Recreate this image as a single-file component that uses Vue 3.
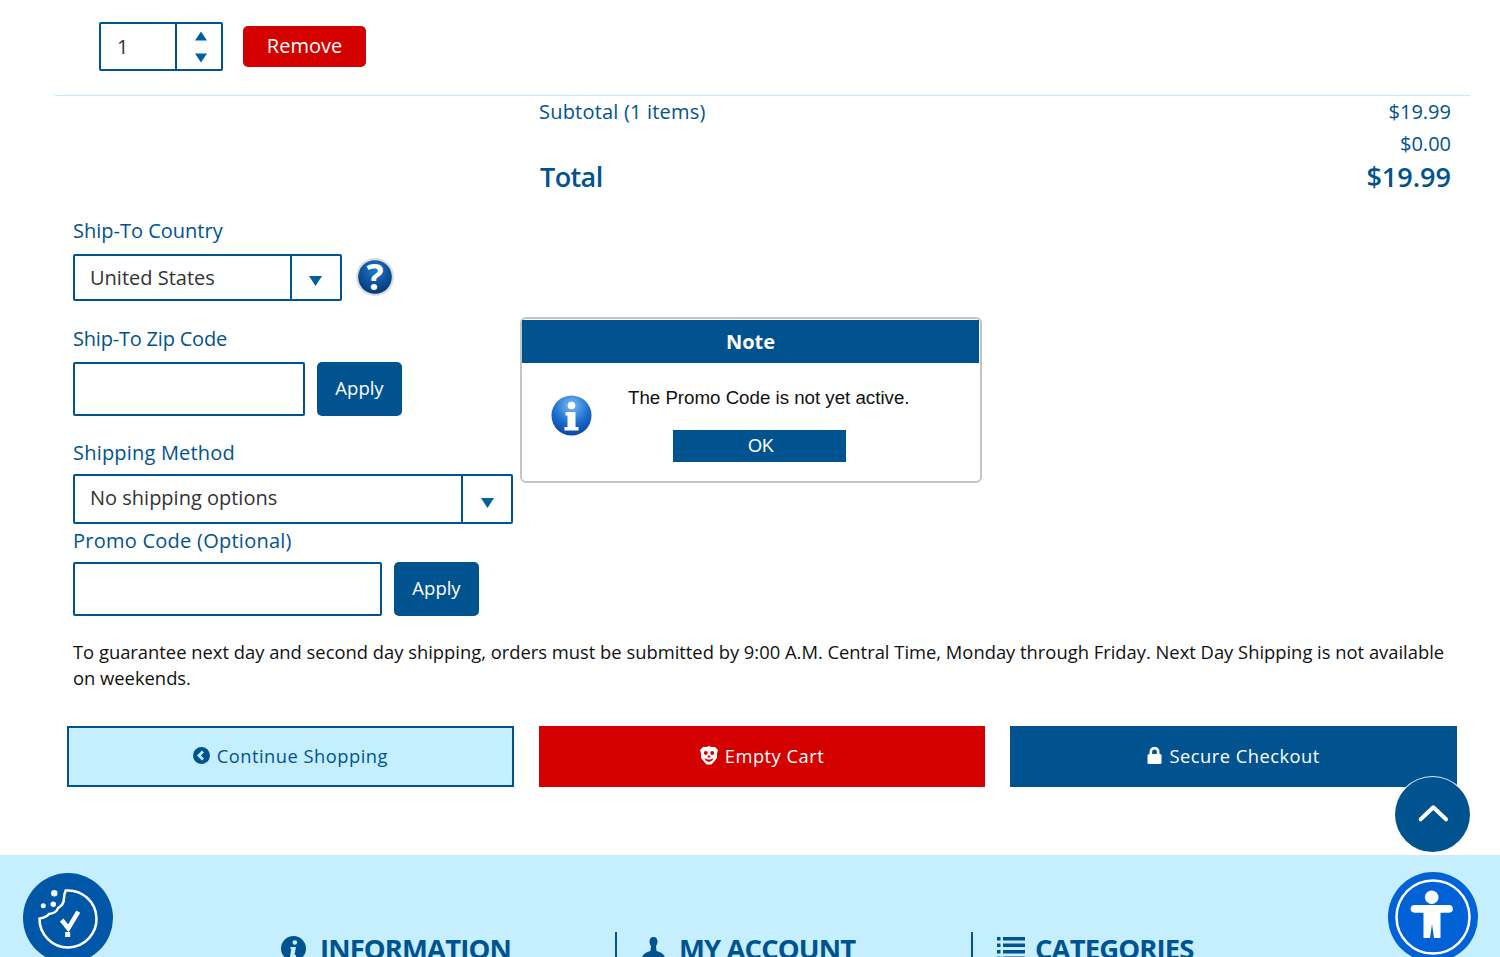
<script setup>
const footerCols = [
  { title: 'INFORMATION', icon: 'info' },
  { title: 'MY ACCOUNT', icon: 'user' },
  { title: 'CATEGORIES', icon: 'list' },
]
</script>

<template>
  <div class="page">
    <div class="qty-row">
      <div class="qty">
        <span class="qty-val">1</span>
        <div class="qty-spin">
          <svg width="12" height="10" viewBox="0 0 13 10"><path d="M6.5 0L13 10H0z" fill="#00609f" /></svg>
          <svg width="12" height="10" viewBox="0 0 13 10"><path d="M0 0H13L6.5 10z" fill="#00609f" /></svg>
        </div>
      </div>
      <button class="btn-remove">Remove</button>
    </div>

    <div class="totals">
      <div class="total-row"><span class="sub-lbl">Subtotal (1 items)</span><span>$19.99</span></div>
      <div class="total-row"><span></span><span>$0.00</span></div>
      <div class="total-row grand"><span class="total-lbl">Total</span><span>$19.99</span></div>
    </div>

    <div class="form">
      <label class="lbl first">Ship-To Country</label>
      <div class="select-line">
        <div class="select country">
          <span class="select-text">United States</span>
          <div class="select-arrow">
            <svg width="13" height="10" viewBox="0 0 13 10"><path d="M0 0H13L6.5 10z" fill="#00609f" /></svg>
          </div>
        </div>
        <svg class="help" width="38" height="38" viewBox="0 0 38 38">
          <defs>
            <radialGradient id="helpBall" cx="50%" cy="30%" r="75%">
              <stop offset="0" stop-color="#1f78cc" />
              <stop offset="1" stop-color="#00336f" />
            </radialGradient>
          </defs>
          <circle cx="19" cy="19" r="19" fill="#d5dde3" />
          <circle cx="19" cy="19" r="16.8" fill="url(#helpBall)" />
          <text class="help-mark" x="19" y="32" text-anchor="middle">?</text>
        </svg>
      </div>

      <label class="lbl zip-lbl">Ship-To Zip Code</label>
      <div class="input-line zip-line">
        <div class="input zip-input"></div>
        <button class="btn-apply">Apply</button>
      </div>

      <label class="lbl ship-lbl">Shipping Method</label>
      <div class="select shipping">
        <span class="select-text">No shipping options</span>
        <div class="select-arrow wide">
          <svg width="13" height="10" viewBox="0 0 13 10"><path d="M0 0H13L6.5 10z" fill="#00609f" /></svg>
        </div>
      </div>

      <label class="lbl promo-lbl">Promo Code (Optional)</label>
      <div class="input-line">
        <div class="input promo-input"></div>
        <button class="btn-apply">Apply</button>
      </div>
    </div>

    <p class="notice">To guarantee next day and second day shipping, orders must be submitted by 9:00 A.M. Central Time, Monday through Friday. Next Day Shipping is not available on weekends.</p>

    <div class="actions">
      <button class="act act-light">
        <svg width="17" height="17" viewBox="0 0 17 17">
          <circle cx="8.500" cy="8.500" r="8.500" fill="#00538f" />
          <path d="M10 4.500L6 8.500l4 4" fill="none" stroke="#c5efff" stroke-width="2.800" />
        </svg>
        Continue Shopping
      </button>
      <button class="act act-red">
        <svg width="18" height="19" viewBox="0 0 18 19">
          <path d="M3 1h3.500L9 0l2.500 1H15l3 3-1 3.500V12l-5.500 6.500h-5L1 12V7.500L0 4z" fill="#fff" />
          <circle cx="5.800" cy="7" r="1.900" fill="#d40000" />
          <circle cx="12.200" cy="7" r="1.900" fill="#d40000" />
          <path d="M8 9.500h2l.5 2h-3zM4.500 12l3 1.500h3l3-1.500-1.200 2.500L9 16l-3.300-1.500z" fill="#d40000" />
        </svg>
        Empty Cart
      </button>
      <button class="act act-navy">
        <svg width="15" height="17" viewBox="0 0 15 17">
          <path d="M3.800 8V4.800a3.700 3.700 0 0 1 7.400 0V8" fill="none" stroke="#fff" stroke-width="2.600" />
          <rect x="0.500" y="7" width="14" height="10" rx="1.500" fill="#fff" />
        </svg>
        Secure Checkout
      </button>
    </div>

    <footer class="footer">
      <div v-for="(col, i) in footerCols" :key="col.title" class="foot-col" :class="'foot-col-' + i">
        <svg v-if="col.icon === 'info'" class="foot-icon" width="25" height="25" viewBox="0 0 25 25">
          <circle cx="12.500" cy="12.500" r="12.500" fill="#00538f" />
          <circle cx="13.800" cy="6.500" r="2.300" fill="#c5efff" />
          <path d="M9.500 11h5.500l-1.500 8h1.500v2H9l1.200-8H9.300z" fill="#c5efff" />
        </svg>
        <svg v-else-if="col.icon === 'user'" class="foot-icon" width="25" height="25" viewBox="0 0 25 25">
          <path d="M12.500 1c2.700 0 4 2 4 4.500 0 2-.8 3.500-1.500 4.500l.5 5c3.700 1 8.500 2.500 9.500 10H0c1-7.500 5.800-9 9.500-10l.5-5C9.300 9 8.500 7.500 8.500 5.500 8.500 3 9.800 1 12.500 1z" fill="#00538f" />
        </svg>
        <svg v-else class="foot-icon list-icon" width="28" height="25" viewBox="0 0 28 25">
          <path d="M0 0h3.500v3.500H0zM6 0h22v3.500H6zM0 6.500h3.500V10H0zM6 6.500h22V10H6zM0 13h3.500v3.500H0zM6 13h22v3.500H6zM0 19.500h3.500V23H0zM6 19.500h22V23H6z" fill="#00538f" />
        </svg>
        <span class="foot-title">{{ col.title }}</span>
      </div>
    </footer>

    <div class="modal">
      <div class="modal-head">Note</div>
      <div class="modal-body">
        <svg class="modal-icon" width="41" height="41" viewBox="0 0 41 41">
          <defs>
            <radialGradient id="infoBall" cx="50%" cy="25%" r="80%">
              <stop offset="0" stop-color="#7fbcf2" />
              <stop offset="0.55" stop-color="#1c6fd0" />
              <stop offset="1" stop-color="#0a3f9c" />
            </radialGradient>
          </defs>
          <circle cx="20.500" cy="20.500" r="20" fill="url(#infoBall)" />
          <circle cx="20.500" cy="10.500" r="3.800" fill="#fff" />
          <path d="M14.500 17h10v15h3v3.500h-14V32h3V20.500h-2z" fill="#fff" />
        </svg>
        <div class="modal-main">
          <p class="modal-msg">The Promo Code is not yet active.</p>
          <button class="modal-ok">OK</button>
        </div>
      </div>
    </div>

    <button class="to-top" aria-label="Back to top">
      <svg width="75" height="75" viewBox="0 0 75 75">
        <path d="M25.700 42.300L38.300 30.300 51 42.300" fill="none" stroke="#fff" stroke-width="4" stroke-linecap="round" stroke-linejoin="round" />
      </svg>
    </button>

    <button class="cookie" aria-label="Cookie settings">
      <svg width="90" height="90" viewBox="0 0 90 90" fill="none" stroke="#fff" stroke-width="2.500">
        <path d="M42.700 17.500A28.500 28.500 0 1 1 16.500 45.500C20 45 24 43.500 26 41c4-.5 8-2.500 9-6 3-1.500 6-5 6-10 0-2.500.7-5 1.700-7.500z" />
        <path d="M38.700 47l6.600 8.300 10-16.600" stroke-width="4.500" />
        <rect x="42.200" y="59" width="5" height="5" fill="#fff" stroke="none" />
        <circle cx="31.300" cy="20.300" r="3.200" fill="#fff" stroke="none" />
        <circle cx="20.300" cy="32.700" r="2.500" fill="#fff" stroke="none" />
        <circle cx="30.300" cy="31.300" r="2.700" fill="#fff" stroke="none" />
      </svg>
    </button>

    <button class="a11y" aria-label="Accessibility">
      <svg width="90" height="90" viewBox="0 0 90 90">
        <circle cx="45" cy="45" r="36.500" fill="none" stroke="#fff" stroke-width="2.500" />
        <circle cx="43.700" cy="25.300" r="6.800" fill="#fff" />
        <path d="M26.500 33H61a3.850 3.850 0 0 1 0 7.700H52.500V66H46L44 52l-2 14H35.500V40.700H26.500a3.850 3.850 0 0 1 0-7.700z" fill="#fff" />
      </svg>
    </button>
  </div>
</template>

<style>
html, body {
  margin: 0;
  background: #fff;
}
</style>

<style scoped>
.page {
  position: relative;
  width: 1500px;
  height: 957px;
  overflow: hidden;
  font-family: "Open Sans", "Liberation Sans", sans-serif;
  color: #111;
}

button {
  font-family: inherit;
  border: none;
  padding: 0;
  cursor: pointer;
}

.qty-row {
  display: flex;
  align-items: center;
  gap: 20px;
  margin: 0 30px 0 55px;
  padding: 22px 0 24px 44px;
  border-bottom: 1px solid #bdeeff;
  height: 49px;
}

.qty {
  display: flex;
  width: 124px;
  height: 49px;
  box-sizing: border-box;
  border: 2px solid #00538f;
  border-radius: 2px;
}

.qty-val {
  width: 74px;
  padding-left: 16px;
  box-sizing: border-box;
  font-size: 20px;
  line-height: 45px;
  color: #333;
}

.qty-spin {
  flex: 1;
  border-left: 2px solid #00538f;
  padding-left: 3px;
  display: flex;
  flex-direction: column;
  align-items: center;
  justify-content: center;
  gap: 12px;
}

.btn-remove {
  width: 123px;
  height: 41px;
  margin-top: -1px;
  padding-bottom: 2px;
  background: #d40000;
  color: #fff;
  border-radius: 5px;
  font-size: 20px;
}

.totals {
  margin: 0 49px 0 539px;
  color: #00538f;
}

.total-row {
  display: flex;
  justify-content: space-between;
  font-size: 20px;
  line-height: 32px;
}

.sub-lbl {
  letter-spacing: 0.2px;
}

.total-row.grand {
  font-size: 27px;
  font-weight: 600;
  line-height: 34px;
  padding-bottom: 2px;
  margin-left: 1px;
}

.total-lbl {
  letter-spacing: -0.6px;
}

.form {
  margin-left: 73px;
}

.lbl {
  display: block;
  color: #00538f;
  font-size: 20px;
  line-height: 28px;
}

.lbl.first {
  margin-top: 21px;
}

.select-line {
  display: flex;
  align-items: center;
  gap: 14px;
  margin-top: 9px;
}

.help {
  margin-top: -1px;
  overflow: visible;
}

.help-mark {
  font-family: "Open Sans", sans-serif;
  font-size: 36px;
  font-weight: 700;
  fill: #fff;
}

.select {
  display: flex;
  box-sizing: border-box;
  border: 2px solid #00538f;
  border-radius: 2px;
  background: #fff;
}

.select.country {
  width: 269px;
  height: 47px;
}

.select.shipping {
  width: 440px;
  height: 50px;
  margin-top: 7px;
}

.select-text {
  flex: 1;
  padding-left: 15px;
  font-size: 20px;
  line-height: 44px;
  color: #333;
}

.select-arrow {
  width: 50px;
  border-left: 2px solid #00538f;
  display: flex;
  align-items: center;
  justify-content: center;
  padding: 7px 2px 0 0;
  box-sizing: border-box;
}

.select-arrow.wide {
  padding-right: 0;
}

.zip-lbl {
  margin-top: 24px;
  letter-spacing: -0.2px;
}

.ship-lbl {
  margin-top: 23px;
  letter-spacing: 0.2px;
}

.promo-lbl {
  margin-top: 3px;
  letter-spacing: 0.25px;
}

.input-line {
  display: flex;
  align-items: flex-start;
  gap: 12px;
  margin-top: 7px;
}

.zip-line {
  margin-top: 9px;
}

.input {
  box-sizing: border-box;
  height: 54px;
  border: 2px solid #00538f;
  border-radius: 2px;
  background: #fff;
}

.zip-input {
  width: 232px;
}

.promo-input {
  width: 309px;
}

.btn-apply {
  width: 85px;
  height: 54px;
  padding-bottom: 3px;
  background: #00538f;
  color: #fff;
  border-radius: 5px;
  font-size: 18.500px;
}

.notice {
  margin: 23px 50px 0 73px;
  font-size: 18.370px;
  line-height: 26px;
  color: #111;
}

.actions {
  display: grid;
  grid-template-columns: repeat(3, 1fr);
  gap: 25px;
  margin: 35px 43px 0 67px;
}

.act {
  height: 61px;
  padding-bottom: 2px;
  box-sizing: border-box;
  display: flex;
  align-items: center;
  justify-content: center;
  gap: 7px;
  font-size: 18.300px;
  letter-spacing: 0.5px;
}

.act-light {
  background: #c5efff;
  color: #00538f;
  border: 2px solid #00538f;
}

.act-red {
  background: #d40000;
  color: #fff;
}

.act-navy {
  background: #00538f;
  color: #fff;
}

.footer {
  position: relative;
  margin-top: 68px;
  height: 102px;
  background: #c5efff;
  display: flex;
  padding: 77px 0 0 281px;
  box-sizing: border-box;
}

.foot-col {
  display: flex;
  align-items: flex-start;
  gap: 14px;
  height: 40px;
  flex-shrink: 0;
}

.foot-col-0 {
  width: 334px;
}

.foot-col-1 {
  width: 356px;
  border-left: 2px solid #00538f;
  padding-left: 24px;
  box-sizing: border-box;
  gap: 13px;
}

.foot-col-2 {
  border-left: 2px solid #00538f;
  padding-left: 24px;
  gap: 10px;
}

.foot-icon {
  margin-top: 4px;
}

.list-icon {
  margin-top: 5px;
}

.foot-title {
  margin-top: 2px;
  font-size: 27.500px;
  font-weight: 700;
  letter-spacing: -0.9px;
  color: #00538f;
  line-height: 30px;
}

.modal {
  position: absolute;
  left: 520px;
  top: 317px;
  width: 462px;
  height: 166px;
  box-sizing: border-box;
  padding: 1px 1px 0 0;
  background: #fff;
  border: 2px solid #c4c4c4;
  border-radius: 6px;
}

.modal-head {
  height: 43px;
  background: #00538f;
  color: #fff;
  font-weight: 700;
  font-size: 20px;
  line-height: 43px;
  text-align: center;
}

.modal-body {
  display: flex;
}

.modal-icon {
  margin: 32px 0 0 29px;
  flex-shrink: 0;
}

.modal-main {
  margin-left: 36px;
  font-family: "Liberation Sans", Arial, sans-serif;
}

.modal-msg {
  margin: 24px 0 0;
  font-size: 18.700px;
  line-height: 22px;
  color: #111;
  white-space: nowrap;
}

.modal-ok {
  display: block;
  margin: 21px 0 0 45px;
  width: 173px;
  height: 32px;
  padding-left: 3px;
  background: #00538f;
  color: #fff;
  font-family: inherit;
  font-size: 18px;
}

.to-top {
  position: absolute;
  left: 1395px;
  top: 777px;
  width: 75px;
  height: 75px;
  border-radius: 50%;
  background: #00538f;
  box-shadow: 0 0 0 1px rgba(255, 255, 255, 0.85);
}

.cookie {
  position: absolute;
  left: 23px;
  top: 873px;
  width: 90px;
  height: 90px;
  border-radius: 50%;
  background: #0057a8;
}

.a11y {
  position: absolute;
  left: 1388px;
  top: 872px;
  width: 90px;
  height: 90px;
  border-radius: 50%;
  background: #0062d6;
}

.to-top svg,
.cookie svg,
.a11y svg {
  display: block;
}
</style>
